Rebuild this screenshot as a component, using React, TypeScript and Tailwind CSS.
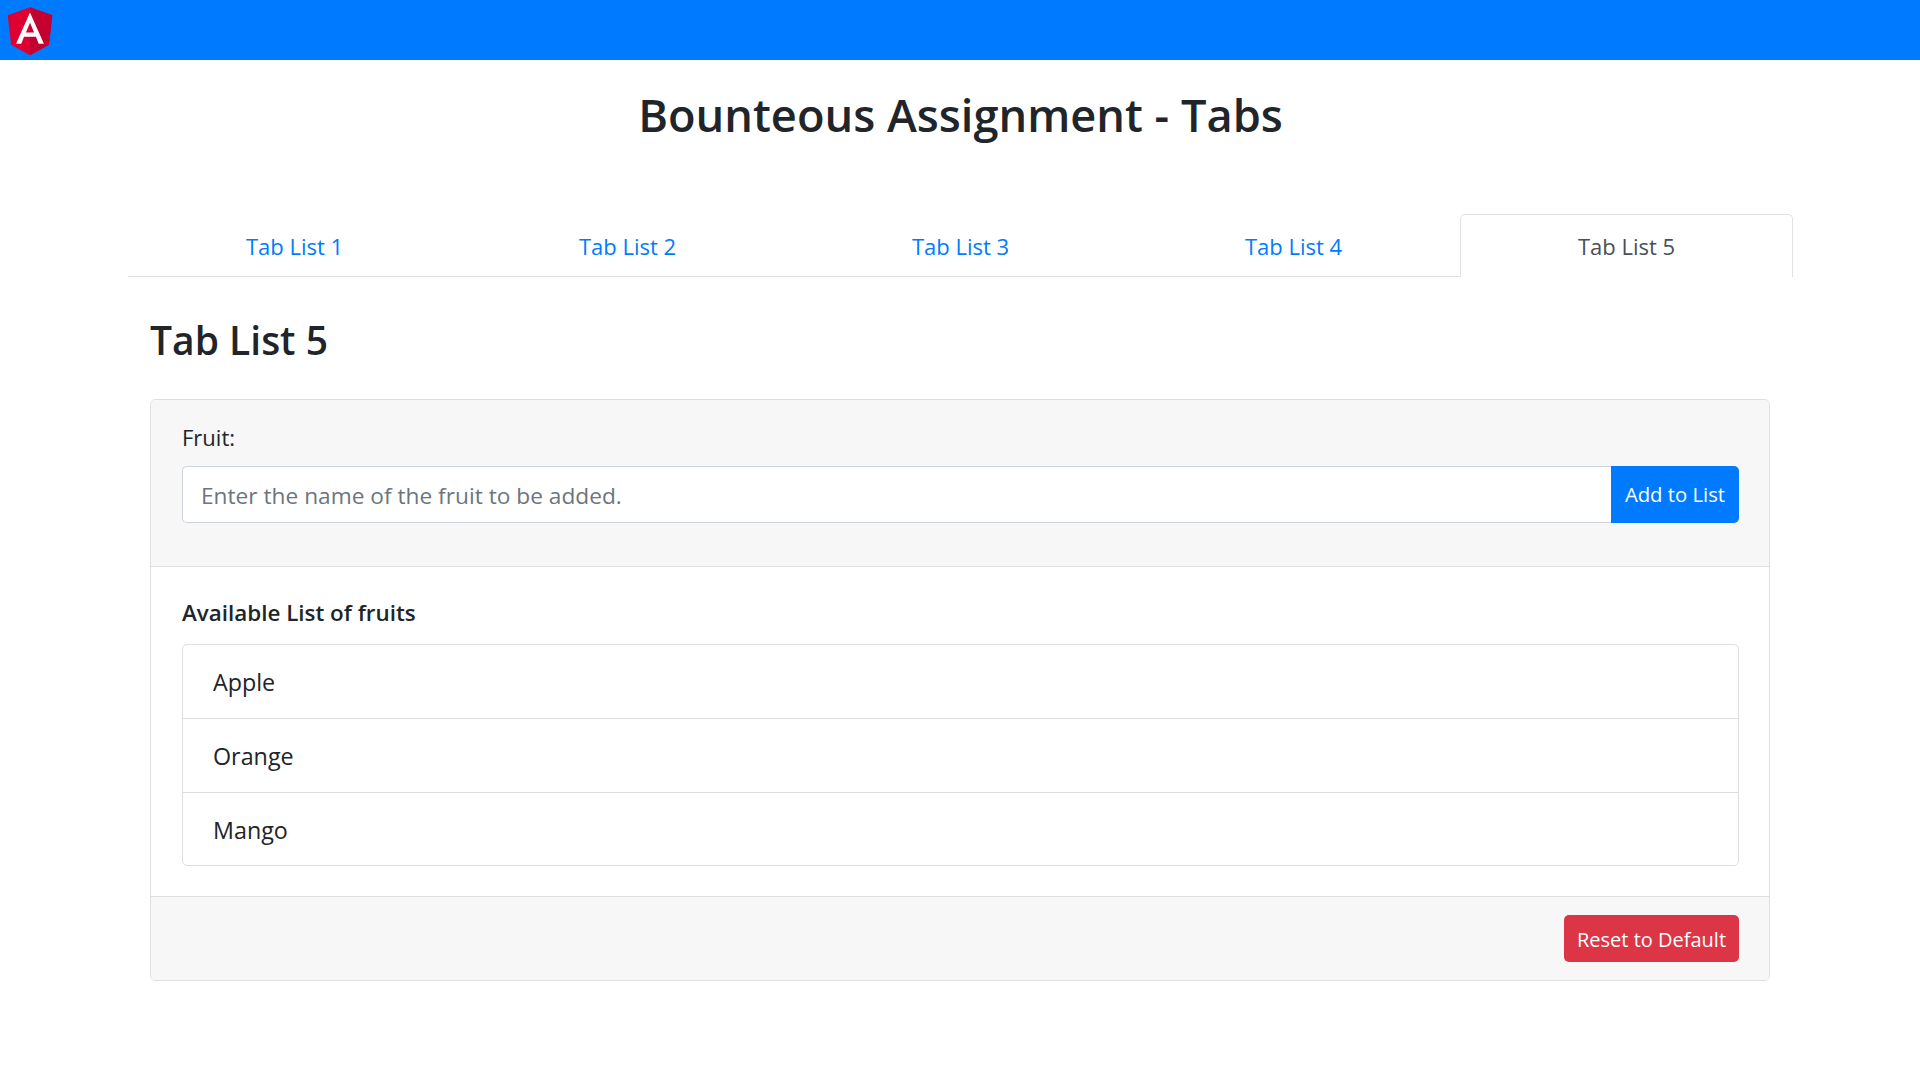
const tabs = ['Tab List 1', 'Tab List 2', 'Tab List 3', 'Tab List 4', 'Tab List 5'];
const fruits = ['Apple', 'Orange', 'Mango'];

function AngularLogo() {
	return (
		<svg viewBox="0 0 250 250" className="h-[60px] w-[60px]">
			<polygon fill="#DD0031" points="125,30 31.9,63.2 46.1,186.3 125,230 203.9,186.3 218.1,63.2" />
			<polygon fill="#C3002F" points="125,30 125,230 203.9,186.3 218.1,63.2" />
			<path
				fill="#FFFFFF"
				d="M125,52.1L66.8,182.6h21.7l11.7-29.2h49.4l11.7,29.2h21.7L125,52.1z M142,135.4H108l17-40.9L142,135.4z"
			/>
		</svg>
	);
}

export default function App() {
	return (
		<div className="min-h-[1080px] bg-white font-['Open_Sans',sans-serif] text-[22px] text-[#212529]">
			<nav className="h-[60px] bg-[#007bff]">
				<AngularLogo />
			</nav>

			<div className="mx-[128px] w-[1665px]">
				<h1 className="mt-[25px] text-center text-[45.2px] leading-[60px] font-semibold">Bounteous Assignment - Tabs</h1>

				<ul className="mt-[69px] flex border-b border-[#dee2e6]">
					{tabs.map((tab, i) => (
						<li key={tab} className="-mb-px flex-1">
							<a
								className={
									i === 4
										? 'block h-[63px] rounded-t-[5px] border border-b-0 border-[#dee2e6] bg-white pt-[16px] text-center leading-[30px] text-[#495057]'
										: 'block h-[63px] pt-[17px] text-center leading-[30px] text-[#007bff]'
								}
							>
								{tab}
							</a>
						</li>
					))}
				</ul>

				<div className="pr-[23px] pl-[22px]">
					<h2 className="mt-[39px] text-[39px] leading-[48px] font-semibold">Tab List 5</h2>

					<div className="mt-[35px] overflow-hidden rounded-[5px] border border-[#dfdfdf]">
						<div className="h-[167px] border-b border-[#dfdfdf] bg-[#f7f7f7] pt-[22px] pr-[30px] pl-[31px]">
							<label className="block leading-[30px]">Fruit:</label>
							<div className="mt-[14px] flex h-[57px]">
								<input
									placeholder="Enter the name of the fruit to be added."
									className="min-w-0 flex-1 rounded-l-[5px] border border-r-0 border-[#ced4da] bg-white px-[18px] pt-[3px] text-[22.7px] text-[#495057] placeholder:text-[#6c757d]"
								/>
								<button className="w-[128px] rounded-r-[5px] bg-[#007bff] text-[20.3px] text-white">Add to List</button>
							</div>
						</div>

						<div className="h-[329px] pt-[31px] pr-[30px] pl-[31px]">
							<h3 className="text-[22.4px] leading-[30px] font-semibold">Available List of fruits</h3>
							<ul className="mt-[16px] rounded-[5px] border border-[#dfdfdf]">
								{fruits.map((fruit, i) => (
									<li
										key={fruit}
										className={
											i === 0
												? 'h-[73px] px-[30px] pt-[22px] text-[23.3px] leading-[30px]'
												: 'h-[73.5px] border-t border-[#dfdfdf] px-[30px] pt-[22px] text-[23.3px] leading-[30px]'
										}
									>
										{fruit}
									</li>
								))}
							</ul>
						</div>

						<div className="flex h-[84px] items-center justify-end border-t border-[#dfdfdf] bg-[#f7f7f7] pr-[30px] pl-[31px]">
							<button className="h-[47px] w-[175px] rounded-[5px] bg-[#dc3545] pt-[2px] text-[20px] text-white">Reset to Default</button>
						</div>
					</div>
				</div>
			</div>
		</div>
	);
}
